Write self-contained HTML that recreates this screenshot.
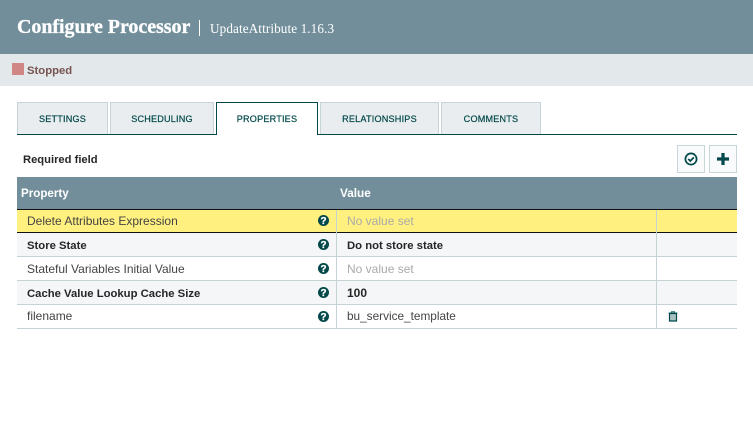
<!DOCTYPE html>
<html><head><meta charset="utf-8"><style>
html,body{margin:0;padding:0;background:#fff}
body{width:753px;height:425px;position:relative;overflow:hidden;font-family:"Liberation Sans",sans-serif;color:#262626}
.a{position:absolute;white-space:nowrap}
.tab{position:absolute;top:102px;background:#e9edef;border:1px solid #c7d5d8;border-bottom:none;box-sizing:border-box;height:32px;text-align:center;font-size:9.1px;line-height:33px;color:#004849;-webkit-text-stroke:.2px #004849;letter-spacing:.2px}
.tab.on{background:#fff;border:1px solid #004849;border-bottom:none;height:33px;z-index:2}
.row{position:absolute;left:17px;width:720px;height:24px;box-sizing:border-box;border-bottom:1px solid #c7d2d7;font-size:12px;line-height:23px}
.row span{position:absolute;top:0;white-space:nowrap}
.k{left:10px}.v{left:330px}
.b{font-weight:bold;font-size:11.3px;line-height:26px}
.g{color:#aaa}
.q{position:absolute;left:300.5px;top:6px;width:11px;height:11px}
.vl{position:absolute;width:1px;background:#c7d2d7;z-index:3}
.btn{position:absolute;top:145px;width:28px;height:28px;box-sizing:border-box;background:#f8fafb;border:1px solid #c7d5d8}
</style></head><body>
<div class="a" style="left:0;top:0;width:753px;height:54px;background:#728e9b"></div>
<div class="a" style="left:17px;top:14px;font:bold 20px/26px 'Liberation Serif',serif;color:#fff;-webkit-text-stroke:.3px #fff;letter-spacing:-.05px">Configure Processor</div>
<div class="a" style="left:199px;top:20px;width:1px;height:16px;background:#fff"></div>
<div class="a" style="left:210px;top:20px;font:13.2px/18px 'Liberation Serif',serif;color:#fff;letter-spacing:.1px">UpdateAttribute 1.16.3</div>
<div class="a" style="left:0;top:54px;width:753px;height:32px;background:#e3e8eb"></div>
<div class="a" style="left:12px;top:63px;width:12px;height:12px;background:#d18686"></div>
<div class="a" style="left:27px;top:64px;font:bold 11.3px/15px 'Liberation Sans',sans-serif;color:#775351">Stopped</div>

<div class="tab" style="left:17px;width:91px">SETTINGS</div>
<div class="tab" style="left:110px;width:104px">SCHEDULING</div>
<div class="tab on" style="left:216px;width:102px">PROPERTIES</div>
<div class="tab" style="left:320px;width:119px">RELATIONSHIPS</div>
<div class="tab" style="left:441px;width:100px">COMMENTS</div>
<div class="a" style="left:17px;top:134px;width:720px;height:1px;background:#004849"></div>
<div class="a" style="left:217px;top:134px;width:100px;height:1px;background:#fff;z-index:3"></div>

<div class="a" style="left:23px;top:153px;font:bold 11.2px/15px 'Liberation Sans',sans-serif;color:#262626">Required field</div>
<div class="btn" style="left:677px"><svg width="26" height="26" viewBox="0 0 26 26"><circle cx="13" cy="13" r="5.6" fill="none" stroke="#004849" stroke-width="1.7"/><path d="M10.3 13l2 2 3.5-3.6" fill="none" stroke="#004849" stroke-width="1.7"/></svg></div>
<div class="btn" style="left:709px"><svg width="26" height="26" viewBox="0 0 26 26"><path d="M13 7v12M7 13h12" stroke="#004849" stroke-width="3.2"/></svg></div>

<div class="a" style="left:17px;top:177px;width:720px;height:32px;background:#728e9b"></div>
<div class="a" style="left:21px;top:187px;font:bold 11.6px/14px 'Liberation Sans',sans-serif;color:#fff">Property</div>
<div class="a" style="left:340px;top:186px;font:bold 11.8px/14px 'Liberation Sans',sans-serif;color:#fff">Value</div>

<div class="row" style="top:209px;background:#fff07f;border-top:1px solid #111;border-bottom:1px solid #111;line-height:22px"><span class="k" style="color:#444">Delete Attributes Expression</span><span class="v g">No value set</span><svg class="q" viewBox="0 0 10 10" style="top:5px"><circle cx="5" cy="5" r="5" fill="#004849"/><text x="5" y="8.4" font-size="9" font-weight="bold" stroke="#fff" stroke-width=".3" text-anchor="middle" fill="#fff" font-family="Liberation Sans">?</text></svg></div>
<div class="row b" style="top:233px;background:#f4f6f7"><span class="k">Store State</span><span class="v">Do not store state</span><svg class="q" viewBox="0 0 10 10"><circle cx="5" cy="5" r="5" fill="#004849"/><text x="5" y="8.4" font-size="9" font-weight="bold" stroke="#fff" stroke-width=".3" text-anchor="middle" fill="#fff" font-family="Liberation Sans">?</text></svg></div>
<div class="row" style="top:257px;background:#fff;line-height:25px"><span class="k" style="color:#444">Stateful Variables Initial Value</span><span class="v g">No value set</span><svg class="q" viewBox="0 0 10 10"><circle cx="5" cy="5" r="5" fill="#004849"/><text x="5" y="8.4" font-size="9" font-weight="bold" stroke="#fff" stroke-width=".3" text-anchor="middle" fill="#fff" font-family="Liberation Sans">?</text></svg></div>
<div class="row b" style="top:281px;background:#f4f6f7"><span class="k">Cache Value Lookup Cache Size</span><span class="v" style="font-size:12px;line-height:25px">100</span><svg class="q" viewBox="0 0 10 10"><circle cx="5" cy="5" r="5" fill="#004849"/><text x="5" y="8.4" font-size="9" font-weight="bold" stroke="#fff" stroke-width=".3" text-anchor="middle" fill="#fff" font-family="Liberation Sans">?</text></svg></div>
<div class="row" style="top:305px;background:#fff"><span class="k" style="color:#444">filename</span><span class="v" style="color:#444;font-size:11.8px">bu_service_template</span><svg class="q" viewBox="0 0 10 10"><circle cx="5" cy="5" r="5" fill="#004849"/><text x="5" y="8.4" font-size="9" font-weight="bold" stroke="#fff" stroke-width=".3" text-anchor="middle" fill="#fff" font-family="Liberation Sans">?</text></svg>
<svg style="position:absolute;left:651px;top:6px" width="10" height="11" viewBox="0 0 10 11"><path d="M.5 2h9M3.5 2V.7h3V2" fill="none" stroke="#1f6a6b" stroke-width="1"/><path d="M1.5 2.5h7V10h-7z" fill="#a9c0c0" stroke="#004849" stroke-width="1.2"/></svg></div>

<div class="vl" style="left:336px;top:210px;height:119px"></div>
<div class="vl" style="left:656px;top:210px;height:119px"></div>
</body></html>
